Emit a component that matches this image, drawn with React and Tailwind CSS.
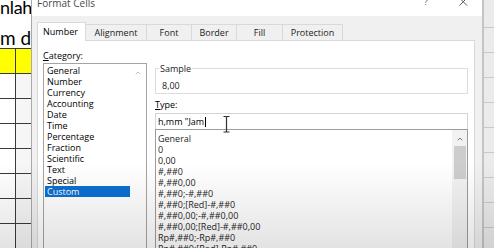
import { ChevronUp } from "lucide-react";

const categories = [
  "General",
  "Number",
  "Currency",
  "Accounting",
  "Date",
  "Time",
  "Percentage",
  "Fraction",
  "Scientific",
  "Text",
  "Special",
  "Custom",
];

const formats = [
  "General",
  "0",
  "0,00",
  "#,##0",
  "#,##0,00",
  "#,##0;-#,##0",
  "#,##0;[Red]-#,##0",
  "#,##0,00;-#,##0,00",
  "#,##0,00;[Red]-#,##0,00",
  "Rp#,##0;-Rp#,##0",
  "Rp#,##0;[Red]-Rp#,##0",
  "Rp#,##0,00;-Rp#,##0,00",
];

const tabs = [
  { label: "Number", w: "w-[49px]" },
  { label: "Alignment", w: "w-[61px]" },
  { label: "Font", w: "w-[45px]" },
  { label: "Border", w: "w-[45px]" },
  { label: "Fill", w: "w-[46px]" },
  { label: "Protection", w: "w-[60px]" },
];

function SheetLeft() {
  return (
    <div className="flex w-[31px] shrink-0 flex-col overflow-hidden bg-white text-black [font-family:Lato,'Liberation_Sans',sans-serif]">
      <div className="flex h-[27px] overflow-hidden">
        <span className="-mt-[5px] whitespace-nowrap text-[18px] leading-[24px] tracking-[-0.3px]">nlah</span>
      </div>
      <div className="flex h-[25px] items-end overflow-hidden">
        <span className="-mb-[2px] whitespace-nowrap text-[19px] leading-[24px]">m d</span>
      </div>
      {[0, 1, 2, 3, 4, 5, 6, 7].map((i) => (
        <div
          key={i}
          className={`flex h-[25px] shrink-0 border-t border-[#3a3a3a] ${i === 0 ? "bg-[#ffff00]" : "bg-white"}`}
        >
          <div className="w-[16px] border-r border-[#3a3a3a]" />
          <div className={`flex-1 ${i === 0 ? "" : "bg-[#f6f6f6]"}`} />
        </div>
      ))}
    </div>
  );
}

function SheetRight() {
  return (
    <div className="flex w-[12px] shrink-0 flex-col border-l-2 border-[#c4c4c4] bg-[#ebebeb]">
      <div className="h-[27px] shrink-0" />
      {[0, 1, 2, 3, 4, 5, 6, 7, 8].map((i) => (
        <div key={i} className="h-[25px] shrink-0 border-t border-[#c9c9c9]" />
      ))}
    </div>
  );
}

function Dialog() {
  return (
    <div className="flex w-[451px] shrink-0 flex-col border-l border-[#a9a9a9] bg-[#f0f0f0] text-[9px] text-black [font-family:'Open_Sans','Noto_Sans',sans-serif]">
      {/* title bar */}
      <div className="flex h-[16px] shrink-0 items-start bg-white pl-[5px] text-[#4a4a4a]">
        <span className="-mt-[4px] text-[10px] leading-[14px]">Format Cells</span>
        <span className="ml-auto -mt-[5px] text-[9px] leading-[14px] text-[#666]">?</span>
        <svg width="9" height="7" viewBox="0 0 9 7" className="ml-[31px] mr-[14px] -mt-px" fill="none" stroke="#555" strokeWidth="1">
          <path d="M0.5 -1 L8 6.5 M8 -1 L0.5 6.5" />
        </svg>
      </div>

      {/* body */}
      <div className="flex flex-1 flex-col pl-[5px] pr-[7px] pt-[6px]">
        <div className="flex h-[18px] shrink-0 items-end">
          {tabs.map((t, i) =>
            i === 0 ? (
              <div
                key={t.label}
                className={`${t.w} relative z-10 flex h-[19px] items-center self-start border-x border-t border-[#d9d9d9] bg-white pb-px pl-[5px] leading-[11px]`}
              >
                {t.label}
              </div>
            ) : (
              <div
                key={t.label}
                className={`${t.w} flex h-[16px] items-center justify-center border-r border-t border-[#d9d9d9] bg-[#f0f0f0] leading-[11px] text-[#222]`}
              >
                {t.label}
              </div>
            )
          )}
        </div>

        <div className="flex flex-1 gap-[8px] border border-[#d9d9d9] bg-white pl-[5px] pr-[6px]">
          {/* category column */}
          <div className="flex w-[104px] flex-col pt-[9px]">
            <div className="leading-[11px]">
              <span className="underline decoration-[0.5px] underline-offset-1">C</span>ategory:
            </div>
            <div className="mt-[2px] flex flex-1 border border-[#a4a4a4] bg-white">
              <div className="w-[86px] pl-px pt-px">
                {categories.map((c) => (
                  <div
                    key={c}
                    className={`h-[11px] pl-[2px] leading-[11px] ${c === "Custom" ? "bg-[#0a6fd1] text-white" : ""}`}
                  >
                    {c}
                  </div>
                ))}
              </div>
              <div className="flex flex-1 justify-center pt-[5px]">
                <ChevronUp size={8} strokeWidth={2} className="text-[#9a9a9a]" />
              </div>
            </div>
          </div>

          {/* right column */}
          <div className="flex w-[313px] flex-col pt-[22px]">
            <fieldset className="border border-[#dcdcdc] pb-[2px]">
              <legend className="ml-[3px] px-px leading-[11px] text-[#222]">Sample</legend>
              <div className="pl-[6px] pt-[6px] leading-[11px] text-[#222]">8,00</div>
            </fieldset>

            <div className="mt-[5px] leading-[11px]">
              <span className="underline decoration-[0.5px] underline-offset-1">T</span>ype:
            </div>
            <div className="relative mt-[3px] flex h-[16px] items-center border border-b-0 border-[#d4d4d4] pl-[2px] leading-[11px]">
              <span>h,mm "Jam</span>
              <span className="ml-px h-[10px] w-px bg-black" />
              <svg width="7" height="17" viewBox="0 0 7 17" className="absolute left-[67px] top-[2px]" fill="none" stroke="#333" strokeWidth="1.2">
                <path d="M0.5 0.5 H6.5 M3.5 0.5 V16 M0.5 16 H6.5" />
              </svg>
            </div>
            <div className="flex flex-1 border border-[#9c9c9c] bg-white">
              <div className="flex-1 pl-[2px] pt-[3px]">
                {formats.map((f) => (
                  <div key={f} className="h-[11px] whitespace-nowrap leading-[11px] text-[#1e1e1e]">
                    {f}
                  </div>
                ))}
              </div>
              <div className="flex w-[15px] flex-col items-center bg-[#f2f2f2] pt-[5px]">
                <ChevronUp size={8} strokeWidth={2.5} className="text-[#606060]" />
                <div className="mt-[3px] h-[33px] w-[12px] bg-[#cdcdcd]" />
              </div>
            </div>
          </div>
        </div>
      </div>
    </div>
  );
}

export default function App() {
  return (
    <div className="relative flex h-[248px] w-[494px] overflow-hidden bg-white">
      <SheetLeft />
      <Dialog />
      <SheetRight />
      <div className="pointer-events-none absolute inset-x-0 bottom-0 h-[85px] bg-gradient-to-b from-transparent to-black/[0.11]" />
    </div>
  );
}
